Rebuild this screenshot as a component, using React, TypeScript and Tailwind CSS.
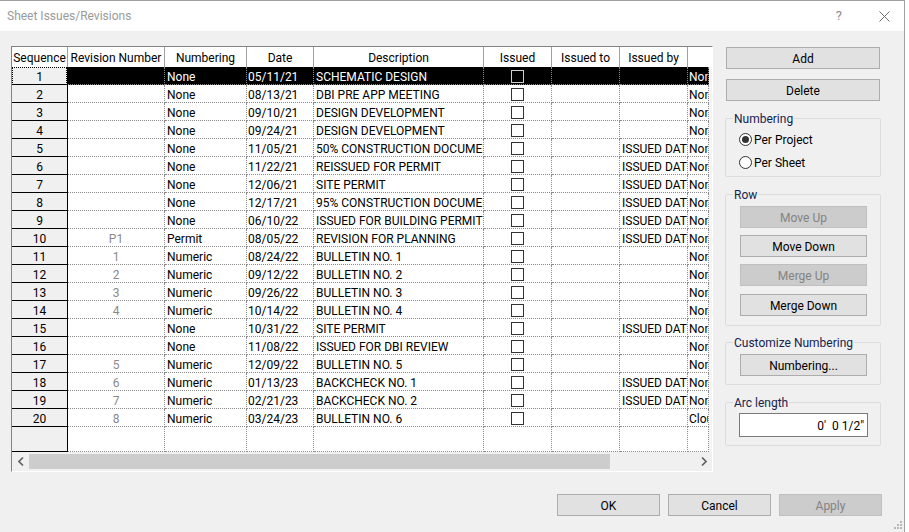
import React from 'react';

type Row = {
  seq: number;
  rev: string;
  numbering: string;
  date: string;
  description: string;
  issuedBy: string;
  last: string;
};

const rows: Row[] = [
  { seq: 1, rev: '', numbering: 'None', date: '05/11/21', description: 'SCHEMATIC DESIGN', issuedBy: '', last: 'None' },
  { seq: 2, rev: '', numbering: 'None', date: '08/13/21', description: 'DBI PRE APP MEETING', issuedBy: '', last: 'None' },
  { seq: 3, rev: '', numbering: 'None', date: '09/10/21', description: 'DESIGN DEVELOPMENT', issuedBy: '', last: 'None' },
  { seq: 4, rev: '', numbering: 'None', date: '09/24/21', description: 'DESIGN DEVELOPMENT', issuedBy: '', last: 'None' },
  { seq: 5, rev: '', numbering: 'None', date: '11/05/21', description: '50% CONSTRUCTION DOCUMENTS', issuedBy: 'ISSUED DATE', last: 'None' },
  { seq: 6, rev: '', numbering: 'None', date: '11/22/21', description: 'REISSUED FOR PERMIT', issuedBy: 'ISSUED DATE', last: 'None' },
  { seq: 7, rev: '', numbering: 'None', date: '12/06/21', description: 'SITE PERMIT', issuedBy: 'ISSUED DATE', last: 'None' },
  { seq: 8, rev: '', numbering: 'None', date: '12/17/21', description: '95% CONSTRUCTION DOCUMENTS', issuedBy: 'ISSUED DATE', last: 'None' },
  { seq: 9, rev: '', numbering: 'None', date: '06/10/22', description: 'ISSUED FOR BUILDING PERMIT', issuedBy: 'ISSUED DATE', last: 'None' },
  { seq: 10, rev: 'P1', numbering: 'Permit', date: '08/05/22', description: 'REVISION FOR PLANNING', issuedBy: 'ISSUED DATE', last: 'None' },
  { seq: 11, rev: '1', numbering: 'Numeric', date: '08/24/22', description: 'BULLETIN NO. 1', issuedBy: '', last: 'None' },
  { seq: 12, rev: '2', numbering: 'Numeric', date: '09/12/22', description: 'BULLETIN NO. 2', issuedBy: '', last: 'None' },
  { seq: 13, rev: '3', numbering: 'Numeric', date: '09/26/22', description: 'BULLETIN NO. 3', issuedBy: '', last: 'None' },
  { seq: 14, rev: '4', numbering: 'Numeric', date: '10/14/22', description: 'BULLETIN NO. 4', issuedBy: '', last: 'None' },
  { seq: 15, rev: '', numbering: 'None', date: '10/31/22', description: 'SITE PERMIT', issuedBy: 'ISSUED DATE', last: 'None' },
  { seq: 16, rev: '', numbering: 'None', date: '11/08/22', description: 'ISSUED FOR DBI REVIEW', issuedBy: '', last: 'None' },
  { seq: 17, rev: '5', numbering: 'Numeric', date: '12/09/22', description: 'BULLETIN NO. 5', issuedBy: '', last: 'None' },
  { seq: 18, rev: '6', numbering: 'Numeric', date: '01/13/23', description: 'BACKCHECK NO. 1', issuedBy: 'ISSUED DATE', last: 'None' },
  { seq: 19, rev: '7', numbering: 'Numeric', date: '02/21/23', description: 'BACKCHECK NO. 2', issuedBy: 'ISSUED DATE', last: 'None' },
  { seq: 20, rev: '8', numbering: 'Numeric', date: '03/24/23', description: 'BULLETIN NO. 6', issuedBy: '', last: 'Cloud' },
];

const cell = 'shrink-0 overflow-hidden whitespace-nowrap border-r border-b border-dotted border-[#8c8c8c] leading-[21px]';

function Checkbox({ selected }: { selected?: boolean }) {
  return (
    <span
      className={
        selected
          ? 'block w-[13px] h-[13px] border border-[#cfcfcf] bg-black'
          : 'block w-[13px] h-[13px] border border-[#333333] bg-white'
      }
    />
  );
}

function GridRow({ row }: { row: Row }) {
  const sel = row.seq === 1;
  const bg = sel ? 'bg-black' : 'bg-white';
  const fg = sel ? 'text-white' : 'text-black';
  return (
    <div className="flex h-[18px] shrink-0">
      <div className="w-[56px] shrink-0 bg-[#f0f0f0] border-r border-b border-black overflow-hidden">
        {sel ? (
          <div className="h-[18px] -mb-px border border-dotted border-black text-center leading-[19px]">{row.seq}</div>
        ) : (
          <div className="text-center leading-[21px]">{row.seq}</div>
        )}
      </div>
      <div className={`${cell} ${bg} w-[97px] text-center ${sel ? 'text-white' : 'text-[#8a8a8a]'}`}>{row.rev}</div>
      <div className={`${cell} ${bg} ${fg} w-[82px] pl-[2px]`}>{row.numbering}</div>
      <div className={`${cell} ${bg} ${fg} w-[67px] pl-[1px]`}>{row.date}</div>
      <div className={`${cell} ${bg} ${fg} w-[170px] pl-[2px]`}>{row.description}</div>
      <div className={`${cell} ${bg} w-[68px] flex items-start justify-center pt-[3px]`}>
        <Checkbox selected={sel} />
      </div>
      <div className={`${cell} ${bg} w-[68px]`} />
      <div className={`${cell} ${bg} ${fg} w-[68px] pl-[2px]`}>{row.issuedBy}</div>
      <div className={`${cell} ${bg} ${fg} w-[21px] pl-[1px]`}>{row.last}</div>
    </div>
  );
}

function HeaderCell({ w, children }: { w: string; children?: React.ReactNode }) {
  return (
    <div className={`${w} shrink-0 border-r border-[#a0a0a0] text-center leading-[22px] whitespace-nowrap overflow-hidden`}>
      {children}
    </div>
  );
}

function Button({ label, disabled, className = '' }: { label: string; disabled?: boolean; className?: string }) {
  return (
    <div
      className={`${className} flex items-center justify-center pt-px border ${
        disabled ? 'bg-[#cccccc] border-[#bfbfbf] text-[#838383]' : 'bg-[#e1e1e1] border-[#adadad] text-black'
      }`}
    >
      {label}
    </div>
  );
}

function Group({ title, className = '', children }: { title: string; className?: string; children?: React.ReactNode }) {
  return (
    <div className={`relative border border-[#dcdcdc] rounded-[2px] ${className}`}>
      <span className="absolute -top-[8px] left-[7px] bg-[#f0f0f0] px-px leading-[16px] text-[#15234f]">{title}</span>
      {children}
    </div>
  );
}

function Radio({ checked, label }: { checked?: boolean; label: string }) {
  return (
    <div className="flex items-center h-[14px]">
      <span className="w-[13px] h-[13px] rounded-full border border-[#333333] bg-white flex items-center justify-center">
        {checked && <span className="w-[7px] h-[7px] rounded-full bg-[#333333]" />}
      </span>
      <span className="ml-[2px] pt-px">{label}</span>
    </div>
  );
}

export default function App() {
  return (
    <div className="w-[909px] h-[532px] bg-white flex font-[Roboto,sans-serif] text-[12px] text-black overflow-hidden">
      <div className="w-[905px] h-[532px] shrink-0 flex flex-col border-t border-r border-[#a0a0a0] relative">
        {/* title bar */}
        <div className="h-[30px] shrink-0 bg-white flex items-center pl-[7px] pr-[14px]">
          <span className="text-[#9a9a9a] text-[12px]">Sheet Issues/Revisions</span>
          <span className="ml-auto text-[#8a8a8a] text-[13px] mr-[37px]">?</span>
          <svg width="11" height="11" viewBox="0 0 11 11">
            <path d="M0.5 0.5 L10.5 10.5 M10.5 0.5 L0.5 10.5" stroke="#6e6e6e" strokeWidth="1" />
          </svg>
        </div>

        {/* body */}
        <div className="flex-1 bg-[#f0f0f0] flex flex-col pt-[15px] pl-[11px]">
          <div className="flex items-start">
            {/* grid */}
            <div className="w-[702px] h-[426px] shrink-0 bg-[#f4f4f4] border-t border-l border-[#828282] border-r-white border-b-white border-r border-b flex flex-col overflow-hidden">
              <div className="flex h-[20px] bg-white shrink-0">
                <HeaderCell w="w-[56px]">Sequence</HeaderCell>
                <HeaderCell w="w-[97px]">Revision Number</HeaderCell>
                <HeaderCell w="w-[82px]">Numbering</HeaderCell>
                <HeaderCell w="w-[67px]">Date</HeaderCell>
                <HeaderCell w="w-[170px]">Description</HeaderCell>
                <HeaderCell w="w-[68px]">Issued</HeaderCell>
                <HeaderCell w="w-[68px]">Issued to</HeaderCell>
                <HeaderCell w="w-[68px]">Issued by</HeaderCell>
                <div className="flex-1" />
              </div>
              {rows.map((r) => (
                <GridRow key={r.seq} row={r} />
              ))}
              <div className="flex h-[25px] shrink-0">
                <div className="w-[56px] shrink-0 bg-[#f0f0f0] border-r border-b border-black" />
                <div className={`${cell} bg-white w-[97px]`} />
                <div className={`${cell} bg-white w-[82px]`} />
                <div className={`${cell} bg-white w-[67px]`} />
                <div className={`${cell} bg-white w-[170px]`} />
                <div className={`${cell} bg-white w-[68px]`} />
                <div className={`${cell} bg-white w-[68px]`} />
                <div className={`${cell} bg-white w-[68px]`} />
                <div className={`${cell} bg-white w-[21px]`} />
              </div>
              {/* horizontal scrollbar */}
              <div className="flex h-[19px] shrink-0 bg-[#f0f0f0] items-stretch">
                <div className="w-[17px] flex items-center justify-center">
                  <svg width="6" height="9" viewBox="0 0 6 9">
                    <path d="M5 0.5 L1 4.5 L5 8.5" fill="none" stroke="#606060" strokeWidth="1.6" />
                  </svg>
                </div>
                <div className="w-[581px] my-[2px] bg-[#cdcdcd]" />
                <div className="flex-1" />
                <div className="w-[17px] flex items-center justify-center">
                  <svg width="6" height="9" viewBox="0 0 6 9">
                    <path d="M1 0.5 L5 4.5 L1 8.5" fill="none" stroke="#606060" strokeWidth="1.6" />
                  </svg>
                </div>
              </div>
            </div>

            {/* right panel */}
            <div className="ml-[12px] w-[156px] shrink-0 flex flex-col pt-px">
              <Button label="Add" className="mx-px h-[22px]" />
              <Button label="Delete" className="mx-px h-[22px] mt-[10px]" />

              <Group title="Numbering" className="mt-[17px] h-[59px] pl-[13px] pt-[13px]">
                <Radio checked label="Per Project" />
                <div className="mt-[9px]">
                  <Radio label="Per Sheet" />
                </div>
              </Group>

              <Group title="Row" className="mt-[17px] h-[132px] pl-[14px] pt-[11px]">
                <Button label="Move Up" disabled className="w-[127px] h-[22px]" />
                <Button label="Move Down" className="w-[127px] h-[22px] mt-[7px]" />
                <Button label="Merge Up" disabled className="w-[127px] h-[22px] mt-[7px]" />
                <Button label="Merge Down" className="w-[127px] h-[22px] mt-[8px]" />
              </Group>

              <Group title="Customize Numbering" className="mt-[16px] h-[43px] pl-[14px] pt-[11px]">
                <Button label="Numbering..." className="w-[127px] h-[22px]" />
              </Group>

              <Group title="Arc length" className="mt-[17px] h-[44px] pl-[13px] pt-[10px]">
                <div className="w-[129px] h-[24px] bg-white border border-[#7a7a7a] flex items-center justify-end pr-[3px] pt-px">
                  0'&nbsp;&nbsp;0 1/2"
                </div>
              </Group>
            </div>
          </div>

          {/* bottom buttons */}
          <div className="flex justify-end gap-[8px] mt-[22px] pr-[22px]">
            <Button label="OK" className="w-[103px] h-[22px]" />
            <Button label="Cancel" className="w-[103px] h-[22px]" />
            <Button label="Apply" disabled className="w-[103px] h-[22px]" />
          </div>
        </div>

        {/* size grip */}
        <svg width="10" height="10" viewBox="0 0 10 10" className="absolute right-[1px] bottom-[2px]">
          <rect x="7" y="1" width="2" height="2" fill="#b8b8b8" />
          <rect x="4" y="4" width="2" height="2" fill="#b8b8b8" />
          <rect x="7" y="4" width="2" height="2" fill="#b8b8b8" />
          <rect x="1" y="7" width="2" height="2" fill="#b8b8b8" />
          <rect x="4" y="7" width="2" height="2" fill="#b8b8b8" />
          <rect x="7" y="7" width="2" height="2" fill="#b8b8b8" />
        </svg>
      </div>
    </div>
  );
}
